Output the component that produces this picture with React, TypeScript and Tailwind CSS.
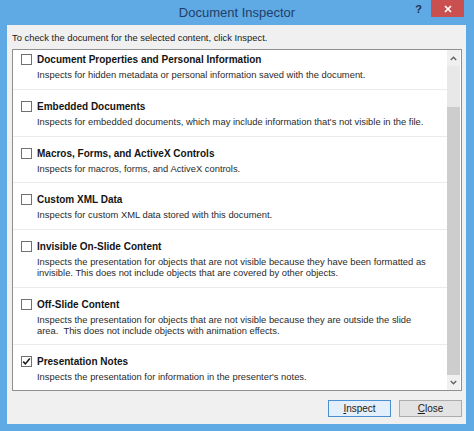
import React from "react";

type Item = { title: string; desc: string[]; checked?: boolean };

const items: Item[] = [
  {
    title: "Document Properties and Personal Information",
    desc: ["Inspects for hidden metadata or personal information saved with the document."],
  },
  {
    title: "Embedded Documents",
    desc: ["Inspects for embedded documents, which may include information that's not visible in the file."],
  },
  {
    title: "Macros, Forms, and ActiveX Controls",
    desc: ["Inspects for macros, forms, and ActiveX controls."],
  },
  {
    title: "Custom XML Data",
    desc: ["Inspects for custom XML data stored with this document."],
  },
  {
    title: "Invisible On-Slide Content",
    desc: [
      "Inspects the presentation for objects that are not visible because they have been formatted as",
      "invisible. This does not include objects that are covered by other objects.",
    ],
  },
  {
    title: "Off-Slide Content",
    desc: [
      "Inspects the presentation for objects that are not visible because they are outside the slide",
      "area.  This does not include objects with animation effects.",
    ],
  },
  {
    title: "Presentation Notes",
    desc: ["Inspects the presentation for information in the presenter's notes."],
    checked: true,
  },
];

function Checkbox({ checked }: { checked?: boolean }) {
  return (
    <div className="mt-[1px] flex h-[11px] w-[11px] shrink-0 items-center justify-center border border-[#707070] bg-white">
      {checked && (
        <svg width="9" height="9" viewBox="0 0 9 9">
          <polyline points="1.2,4.6 3.4,6.9 7.8,1.6" fill="none" stroke="#1a1a1a" strokeWidth="1.6" />
        </svg>
      )}
    </div>
  );
}

function Row({ item }: { item: Item }) {
  return (
    <div className="flex border-b border-[#ebebeb] pl-[8px] pt-[10px] pb-[8.7px]">
      <Checkbox checked={item.checked} />
      <div className="ml-[5px]">
        <div className="whitespace-nowrap text-[10px] font-bold leading-[13px] text-[#141414]">{item.title}</div>
        <div className="mt-[3px] text-[9.4px] leading-[11px] text-[#2a2a2a]">
          {item.desc.map((d, i) => (
            <div key={i} className="whitespace-pre">
              {d}
            </div>
          ))}
        </div>
      </div>
    </div>
  );
}

export default function App() {
  return (
    <div
      className="flex h-[431px] w-[474px] flex-col bg-[#5fa9e5]"
      style={{ fontFamily: '"Liberation Sans", Arial, sans-serif' }}
    >
      {/* Title bar */}
      <div className="relative flex h-[25px] shrink-0 items-center justify-center">
        <span className="text-[13px] leading-none text-[#1f3f68]">Document Inspector</span>
        <div className="absolute right-[10px] top-0 flex items-start">
          <span className="mr-[9px] mt-[4px] text-[11px] font-bold leading-none text-[#1f3050]">?</span>
          <div className="flex h-[17px] w-[33px] items-center justify-center bg-[#c9504e]">
            <svg width="8" height="8" viewBox="0 0 8 8">
              <path d="M1 1 L7 7 M7 1 L1 7" stroke="#ffffff" strokeWidth="1.7" />
            </svg>
          </div>
        </div>
      </div>

      {/* Body */}
      <div className="ml-[7px] mr-[8px] mb-[7px] flex flex-1 flex-col bg-[#f0f0f0] pl-[5px] pr-[4px] pt-[6px] pb-[7px]">
        <div className="text-[9.4px] leading-[13px] text-[#1a1a1a]">
          To check the document for the selected content, click Inspect.
        </div>

        <div className="mt-[5px] flex h-[342px] border border-[#8e8f8f] bg-white">
          <div className="flex-1 overflow-hidden">
            <div className="mt-[-6.7px]">
              {items.map((it) => (
                <Row key={it.title} item={it} />
              ))}
            </div>
          </div>
          <div className="flex w-[13px] flex-col bg-[#e8e8e8]">
            <div className="flex h-[16px] items-center justify-center bg-[#f0f0f0]">
              <svg width="7" height="5" viewBox="0 0 7 5">
                <polyline points="0.8,4 3.5,1.2 6.2,4" fill="none" stroke="#606060" strokeWidth="1.3" />
              </svg>
            </div>
            <div className="h-[41px]" />
            <div className="h-[268px] bg-[#cdcdcd]" />
            <div className="flex flex-1 items-center justify-center bg-[#f0f0f0]">
              <svg width="7" height="5" viewBox="0 0 7 5">
                <polyline points="0.8,1 3.5,3.8 6.2,1" fill="none" stroke="#606060" strokeWidth="1.3" />
              </svg>
            </div>
          </div>
          <div className="w-[1px] bg-white" />
        </div>

        <div className="mt-[9px] flex justify-end gap-[8px]">
          <button className="flex h-[17px] w-[63px] items-center justify-center border border-[#4a8fd0] bg-[#e3effa] text-[10px] leading-none text-[#1a1a1a]">
            <span>
              <span className="underline">I</span>nspect
            </span>
          </button>
          <button className="flex h-[17px] w-[63px] items-center justify-center border border-[#acacac] bg-[#e3e3e3] text-[10px] leading-none text-[#1a1a1a]">
            <span>
              <span className="underline">C</span>lose
            </span>
          </button>
        </div>
      </div>
    </div>
  );
}
